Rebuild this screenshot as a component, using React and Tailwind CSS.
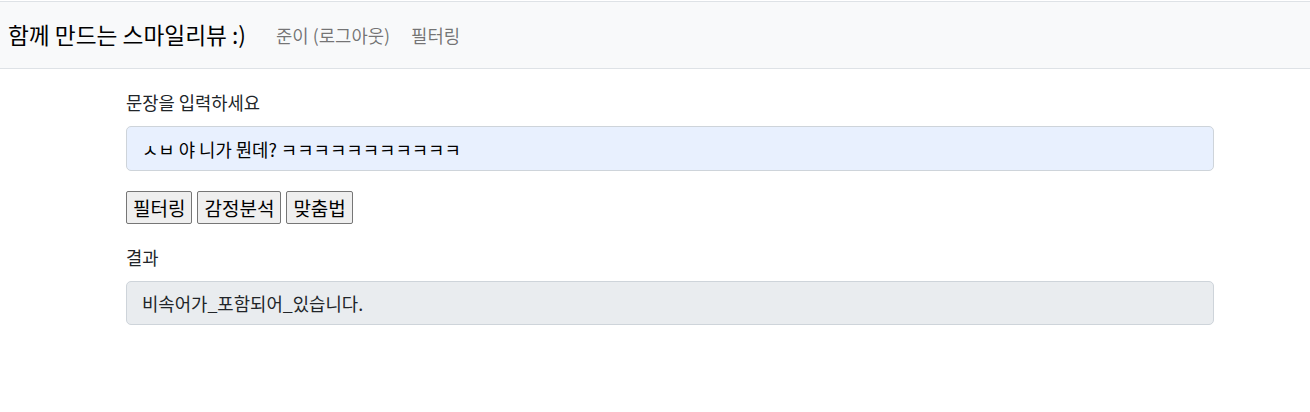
export default function App() {
    const font = { fontFamily: '"Noto Sans CJK KR", "Noto Sans", sans-serif' };

    return (
        <div className="min-h-[412px] bg-white text-[#212529]" style={font}>
            {/* Navbar */}
            <nav className="mt-[1px] flex h-[68px] items-center border-y border-[#dee2e6] bg-[#f8f9fa] px-2">
                <span className="mr-[30px] text-[22.7px] leading-[32px] text-black">함께 만드는 스마일리뷰 :)</span>
                <div className="flex gap-[21px] text-[17.8px] text-[rgba(0,0,0,0.55)]">
                    <a href="#">준이 (로그아웃)</a>
                    <a href="#">필터링</a>
                </div>
            </nav>

            {/* Form */}
            <div className="ml-[126px] w-[1088px] pt-[21px]">
                <label className="block text-[17.7px] leading-[24px]">문장을 입력하세요</label>
                <input
                    className="mt-[12px] block h-[45px] w-full rounded-[5px] border border-[#ced4da] bg-[#e8f0fe] px-[15px] text-[17.8px] text-black outline-none"
                    defaultValue="ㅅㅂ 야 니가 뭔데? ㅋㅋㅋㅋㅋㅋㅋㅋㅋㅋㅋ"
                />
                <div className="mt-[20px] flex gap-[5px]">
                    {["필터링", "감정분석", "맞춤법"].map((label) => (
                        <button
                            key={label}
                            className="h-[33px] rounded-[2px] border border-[#767676] bg-[#efefef] px-[6px] text-[19px] leading-[28px] text-black"
                        >
                            {label}
                        </button>
                    ))}
                </div>
                <label className="mt-[21px] block text-[17.7px] leading-[24px]">결과</label>
                <div className="mt-[12px] flex h-[44px] items-center rounded-[5px] border border-[#ced4da] bg-[#e9ecef] px-[15px] text-[17.8px]">
                    비속어가_포함되어_있습니다.
                </div>
            </div>
        </div>
    );
}
